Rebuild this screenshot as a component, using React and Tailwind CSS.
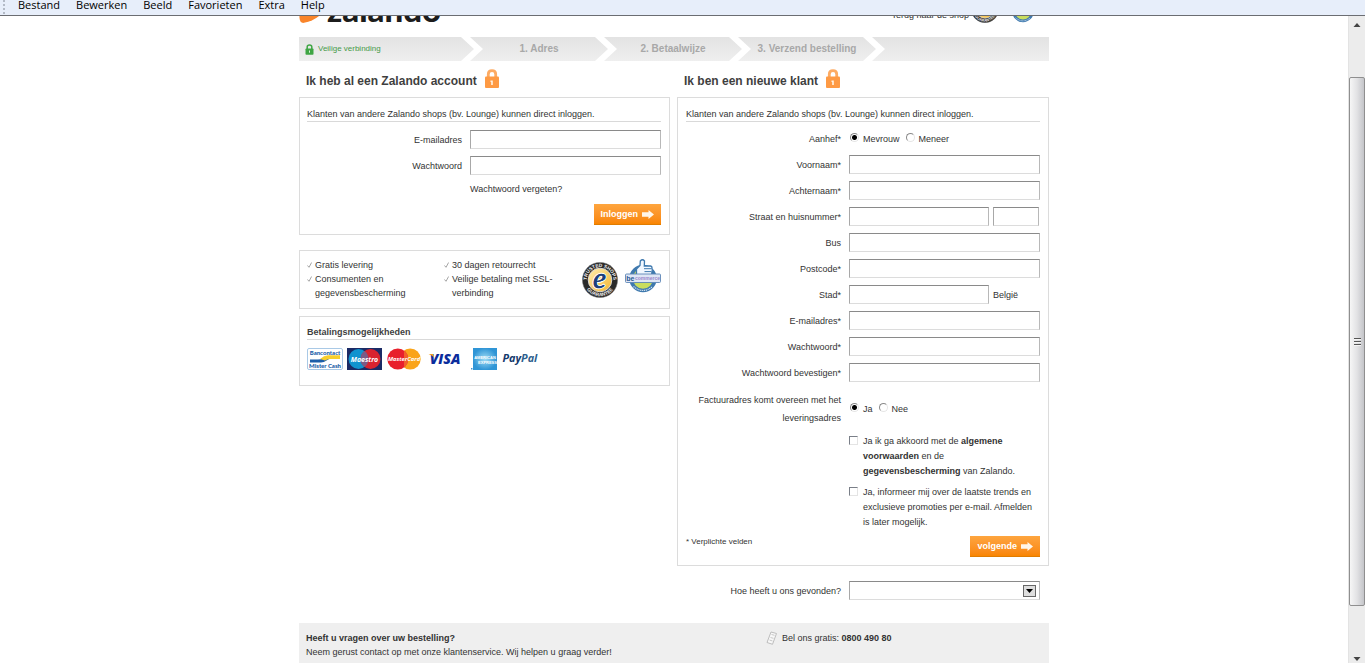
import React from "react";

const fieldBox =
  "h-[19px] rounded-none border border-t-[#8a8a8a] border-l-[#a8a8a8] border-r-[#b8b8b8] border-b-[#dcdcdc] bg-white px-1 text-[9px] outline-none";

const radioBox =
  "h-[9px] w-[9px] shrink-0 appearance-none rounded-full border border-t-[#8a8a8a] border-l-[#8a8a8a] border-r-[#e6e6e6] border-b-[#e6e6e6] bg-white checked:bg-[radial-gradient(circle,#000_0,#000_2px,transparent_3px)]";

const checkBox =
  "mt-[2px] h-[9px] w-[9px] shrink-0 appearance-none border border-t-[#7a7f88] border-l-[#7a7f88] border-r-[#e4e4e4] border-b-[#e4e4e4] bg-white checked:bg-[#555]";

function MenuBar() {
  return (
    <header className="flex h-4 shrink-0 items-start border-b border-[#6b6d72] bg-[#e7eefa] font-['Open_Sans','Noto_Sans',sans-serif] text-[11px] leading-[10px] text-black">
      <svg className="ml-[3px] mr-[13px] h-[14px] w-[2px]" viewBox="0 0 2 14" aria-hidden="true">
        {[0, 4, 8, 12].map((y) => (
          <rect key={y} x="0" y={y} width="2" height="2" fill="#b3bac6" />
        ))}
      </svg>
      <nav className="flex gap-4">
        {["Bestand", "Bewerken", "Beeld", "Favorieten", "Extra", "Help"].map((m) => (
          <button key={m} type="button">
            {m}
          </button>
        ))}
      </nav>
    </header>
  );
}

function ScrollBar() {
  return (
    <div className="flex w-[17px] shrink-0 flex-col border-l border-[#e3e3e3] bg-[#ececec]" aria-hidden="true">
      <svg className="h-[17px] w-4 shrink-0" viewBox="0 0 16 17">
        <path d="M4.500 11 L8 7 L11.500 11 Z" fill="#444" />
      </svg>
      <div className="flex-[44]" />
      <div className="flex flex-[529] items-center justify-center rounded-[2px] border border-[#8f8f8f] bg-linear-to-r from-[#f6f6f6] via-[#e2e2e4] to-[#c4c5c9]">
        <svg className="h-2 w-[7px]" viewBox="0 0 7 8">
          {[0, 3, 6].map((y) => (
            <g key={y}>
              <rect y={y} width="7" height="1" fill="#555" />
              <rect y={y + 1} width="7" height="1" fill="#f4f4f4" />
            </g>
          ))}
        </svg>
      </div>
      <div className="flex-[40]" />
      <svg className="h-[17px] w-4 shrink-0" viewBox="0 0 16 17">
        <path d="M4.500 11 L8 15 L11.500 11 Z" fill="#444" />
      </svg>
    </div>
  );
}

function TrustedBadge({ className, id, showTop = true }) {
  return (
    <svg className={className} viewBox="0 0 36 36" aria-label="Trusted Shops Guarantee">
      <defs>
        <path id={`${id}-top`} d="M5.500 22.500 A13.200 13.200 0 1 1 30.500 22.500" />
        <path id={`${id}-bottom`} d="M1.800 18 A16.200 16.200 0 0 0 34.200 18" />
        <linearGradient id={`${id}-gold`} x1="0" y1="0" x2="1" y2="1">
          <stop offset="0" stopColor="#ffedb0" />
          <stop offset="1" stopColor="#f2b632" />
        </linearGradient>
      </defs>
      <circle cx="18" cy="18" r="17.600" fill="#2a2a2a" stroke="#777" strokeWidth="0.500" />
      <circle cx="18" cy="18" r="11.800" fill={`url(#${id}-gold)`} stroke="#ddd" strokeWidth="0.900" />
      <g fill="#f2f2f2" fontFamily="Liberation Sans, sans-serif" fontWeight="700" fontSize="4.800" textAnchor="middle">
        {showTop && (
          <text>
            <textPath href={`#${id}-top`} startOffset="50%">TRUSTED SHOPS</textPath>
          </text>
        )}
        <text>
          <textPath href={`#${id}-bottom`} startOffset="50%">GUARANTEE</textPath>
        </text>
      </g>
      <text x="17.500" y="25.500" fontSize="29" fontStyle="italic" textAnchor="middle" fill="#1c3f7c" stroke="#fff" strokeWidth="2.500" paintOrder="stroke" fontFamily="Liberation Serif, serif">e</text>
      <text x="17.500" y="25.500" fontSize="29" fontStyle="italic" textAnchor="middle" fill="#1c3f7c" stroke="#1c3f7c" strokeWidth="0.600" aria-hidden="true" fontFamily="Liberation Serif, serif">e</text>
    </svg>
  );
}

function BeCommerceBadge({ className }) {
  return (
    <svg className={className} viewBox="0 0 36 35" aria-label="Be Commerce">
      <circle cx="18" cy="19.500" r="12" fill="#c9dd5f" stroke="#3f79ae" strokeWidth="3.500" />
      <path d="M8.500 27.500 Q18 35.500 27.500 27.500" fill="none" stroke="#cfe0ee" strokeWidth="1.200" strokeDasharray="1.200 0.700" />
      <path d="M11.500 16 V10 L15 6.500 L15.300 2 Q17.500 -0.500 19.500 2 L19.300 7 H25.500 Q27.500 7.500 26.800 9.500 Q28 11.200 26.800 12.800 Q27.500 15 25.500 16 Z" fill="#f2f8ff" stroke="#3f79ae" strokeWidth="1.300" />
      <path d="M19 9.700 H26 M19.500 12.600 H26" stroke="#3f79ae" strokeWidth="1" />
      <rect x="0.500" y="15" width="35" height="8.500" rx="1" fill="#dfe6f5" stroke="#5b86b6" strokeWidth="0.900" />
      <text x="1.300" y="21.500" fontSize="7" fontWeight="700" fill="#2a5a94" fontFamily="Liberation Sans, sans-serif">be</text>
      <text x="10" y="21.200" fontSize="5" fontWeight="700" fill="#9a88cc" fontFamily="Liberation Sans, sans-serif">commerce</text>
    </svg>
  );
}

function OrangeLock() {
  return (
    <svg className="h-5 w-4 shrink-0" viewBox="0 0 16 20" aria-hidden="true">
      <path d="M4.300 9 V5.200 Q4.300 1.700 8 1.700 Q11.700 1.700 11.700 5.200 V9" fill="none" stroke="#fdab63" strokeWidth="2.800" />
      <rect x="1" y="7.500" width="14" height="11.500" rx="1" fill="#fe9a44" />
      <path d="M6.500 11.500 H8.800 V16 H7.200 V13 H6.500 Z" fill="#fff3e4" />
    </svg>
  );
}

function Chevron() {
  return (
    <svg className="h-6 w-[22px] shrink-0" viewBox="0 0 22 24" aria-hidden="true">
      <path d="M0 0 H9 L22 12 L9 24 H0 L13 12 Z" fill="#fff" />
    </svg>
  );
}

function Steps() {
  return (
    <ol className="flex h-6 items-center bg-linear-to-b from-[#e3e3e3] to-[#efefef] text-[10px] font-bold text-[#a8a8a8]">
      <li className="flex w-[162px] items-center gap-1 pl-[6px] text-[8px] font-normal text-[#479a48]">
        <svg className="h-[11px] w-[9px]" viewBox="0 0 9 11" aria-hidden="true">
          <path d="M2.200 5 V3 Q2.200 1 4.500 1 Q6.800 1 6.800 3 V5" fill="none" stroke="#3fa544" strokeWidth="1.500" />
          <rect x="0.500" y="4.500" width="8" height="6.200" rx="0.800" fill="#3fa544" />
          <rect x="4" y="6.500" width="1" height="2.200" fill="#d9f0da" />
        </svg>
        Veilige verbinding
      </li>
      {["1. Adres", "2. Betaalwijze", "3. Verzend bestelling"].map((s) => (
        <li key={s} className="flex items-center">
          <Chevron />
          <span className="w-28 text-center whitespace-nowrap">{s}</span>
        </li>
      ))}
      <li aria-hidden="true">
        <Chevron />
      </li>
    </ol>
  );
}

function Row({ label, id, children }) {
  return (
    <div className="flex items-center gap-2">
      <label htmlFor={id} className="flex-1 text-right">
        {label}
      </label>
      <div className="flex w-[191px] items-center gap-1">{children}</div>
    </div>
  );
}

function TextRow({ label, id, type = "text" }) {
  return (
    <Row label={label} id={id}>
      <input id={id} type={type} className={`${fieldBox} w-full`} />
    </Row>
  );
}

function RadioPair({ name, options }) {
  return (
    <div className="flex h-[19px] items-center gap-[6px] pl-px">
      {options.map((o, i) => (
        <label key={o} className="flex items-start gap-1">
          <input type="radio" name={name} defaultChecked={i === 0} className={radioBox} />
          <span className="leading-3">{o}</span>
        </label>
      ))}
    </div>
  );
}

function OrangeButton({ children }) {
  return (
    <button
      type="submit"
      className="flex h-[21px] items-center gap-1 border-b border-[#e07c00] bg-linear-to-b from-[#fea53e] to-[#f98500] px-[7px] text-[9px] font-bold text-white"
    >
      {children}
      <svg className="h-[9px] w-3" viewBox="0 0 12 9" aria-hidden="true">
        <path d="M0 2.200 H6.500 V0 L12 4.500 L6.500 9 V6.800 H0 Z" fill="#fff6ea" />
      </svg>
    </button>
  );
}

function Usp({ children }) {
  return (
    <li className="flex items-start gap-[3px]">
      <svg className="mt-1 h-[6px] w-[5px] shrink-0" viewBox="0 0 5 6" aria-hidden="true">
        <path d="M0.500 3.500 L2 5.300 L4.600 0.500" fill="none" stroke="#a5a5a5" strokeWidth="1" />
      </svg>
      <span>{children}</span>
    </li>
  );
}

function PaymentLogos() {
  return (
    <div className="mt-2 flex h-[22px] items-center">
      <svg className="mr-1 h-[22px] w-9" viewBox="0 0 36 22" aria-label="Bancontact Mister Cash">
        <rect x="0.500" y="0.500" width="35" height="21" rx="1.500" fill="#fff" stroke="#a9c9e6" />
        <text x="18" y="6.500" fontSize="6" fontWeight="900" textAnchor="middle" fill="#1d5ea8" fontFamily="Lato, sans-serif">Bancontact</text>
        <path d="M3 11.500 H11 Q14 11.500 16.500 10 Q19 8 22 8 H33 V10.500 H25 Q22 10.500 19.500 12.500 Q17 14.500 14 14.500 H3 Z" fill="#1d5ea8" />
        <path d="M13 11 Q17 7.300 21 7.300 H33 V11 H23 Q20 11 18 12.500 Z" fill="#f8cf2c" />
        <text x="18" y="20" fontSize="6" fontWeight="900" textAnchor="middle" fill="#1d5ea8" fontFamily="Lato, sans-serif">Mister Cash</text>
      </svg>
      <svg className="mr-[5px] h-[22px] w-[35px]" viewBox="0 0 35 22" aria-label="Maestro">
        <rect width="35" height="22" fill="#1b2b66" />
        <circle cx="11.500" cy="11" r="10" fill="#1193cf" />
        <circle cx="23.500" cy="11" r="10" fill="#d8232f" />
        <path d="M17.500 3 A10 10 0 0 1 17.500 19 A10 10 0 0 1 17.500 3" fill="#7b5b86" />
        <text x="17.500" y="13.800" fontSize="7" fontWeight="700" fontStyle="italic" textAnchor="middle" fill="#fff" fontFamily="Open Sans, sans-serif">Maestro</text>
      </svg>
      <svg className="mr-[7px] h-[22px] w-[34px]" viewBox="0 0 34 22" aria-label="MasterCard">
        <circle cx="23.200" cy="11" r="10.500" fill="#faa41a" />
        <circle cx="10.800" cy="11" r="10.500" fill="#e8202c" />
        <path d="M17 2.600 V19.400 A10.500 10.500 0 0 0 17 2.600" fill="#f2602a" />
        <text x="17" y="13.400" fontSize="5.800" fontWeight="700" fontStyle="italic" textAnchor="middle" fill="#fff" fontFamily="Open Sans, sans-serif">MasterCard</text>
      </svg>
      <svg className="mr-2 h-[22px] w-[34px]" viewBox="0 0 34 22" aria-label="Visa">
        <text x="17" y="16" fontSize="14" fontWeight="800" fontStyle="italic" textAnchor="middle" fill="#0b2c9c" fontFamily="Open Sans, sans-serif">VISA</text>
        <path d="M0.500 6 H5 L6.300 9.500 Q4 7 0.500 6 Z" fill="#f5a11d" />
      </svg>
      <svg className="mr-[5px] h-[22px] w-[27px]" viewBox="0 0 27 22" aria-label="American Express">
        <defs>
          <radialGradient id="amex">
            <stop offset="0" stopColor="#9fdcf5" />
            <stop offset="1" stopColor="#2f95d6" />
          </radialGradient>
        </defs>
        <rect x="3" width="24" height="22" fill="url(#amex)" />
        <text x="15" y="11" fontSize="4" fontWeight="700" textAnchor="middle" fill="#fff" fontFamily="Liberation Sans, sans-serif">AMERICAN</text>
        <text x="17.500" y="15.500" fontSize="4" fontWeight="700" textAnchor="middle" fill="#fff" fontFamily="Liberation Sans, sans-serif">EXPRESS</text>
        <rect x="1" y="20" width="1.500" height="1.500" fill="#3f96d2" />
      </svg>
      <svg className="h-[22px] w-9" viewBox="0 0 36 22" aria-label="PayPal">
        <text x="0.500" y="14" fontSize="10.800" fontWeight="700" fontStyle="italic" fill="#14386b" fontFamily="Open Sans, sans-serif">
          Pay<tspan fill="#2d5f8e">Pal</tspan>
        </text>
      </svg>
    </div>
  );
}

function Intro() {
  return (
    <p className="border-b border-[#d9d9d9]">
      Klanten van andere Zalando shops (bv. Lounge) kunnen direct inloggen.
    </p>
  );
}

function Heading({ children }) {
  return (
    <h2 className="flex h-9 items-center gap-[7px] pl-[7px] text-[12px] font-bold text-[#3f3f3f]">
      <span className="pt-1">{children}</span>
      <OrangeLock />
    </h2>
  );
}

function LoginColumn() {
  return (
    <section className="min-w-0">
      <Heading>Ik heb al een Zalando account</Heading>
      <form className="border border-[#dcdcdc] pt-[9px] pr-2 pb-[9px] pl-[7px]" onSubmit={(e) => e.preventDefault()}>
        <Intro />
        <div className="mt-2 flex flex-col gap-[7px]">
          <TextRow label="E-mailadres" id="login-email" />
          <TextRow label="Wachtwoord" id="login-password" type="password" />
          <div className="flex justify-end">
            <a href="#forgot" className="w-[191px]">
              Wachtwoord vergeten?
            </a>
          </div>
        </div>
        <div className="mt-2 flex justify-end">
          <OrangeButton>Inloggen</OrangeButton>
        </div>
      </form>

      <div className="mt-[15px] flex border border-[#dcdcdc] pt-[7px] pr-2 pb-2 pl-[7px]">
        <ul className="w-[137px]">
          <Usp>Gratis levering</Usp>
          <Usp>Consumenten en gegevensbescherming</Usp>
        </ul>
        <ul className="w-[122px]">
          <Usp>30 dagen retourrecht</Usp>
          <Usp>Veilige betaling met SSL-verbinding</Usp>
        </ul>
        <div className="flex flex-1 justify-end gap-[7px]">
          <TrustedBadge className="mt-1 h-9 w-9 shrink-0" id="trust" />
          <BeCommerceBadge className="mt-px h-[35px] w-9 shrink-0" />
        </div>
      </div>

      <div className="mt-[7px] border border-[#dcdcdc] pt-2 pr-[7px] pb-[15px] pl-[7px]">
        <h3 className="border-b border-[#d9d9d9] font-bold text-[#3f3f3f]">Betalingsmogelijkheden</h3>
        <PaymentLogos />
      </div>
    </section>
  );
}

function RegisterColumn() {
  return (
    <section className="min-w-0">
      <Heading>Ik ben een nieuwe klant</Heading>
      <form className="border border-[#dcdcdc] px-2 pt-[9px] pb-2" onSubmit={(e) => e.preventDefault()}>
        <Intro />
        <div className="mt-[7px] flex flex-col gap-[7px]">
          <Row label="Aanhef*">
            <RadioPair name="title" options={["Mevrouw", "Meneer"]} />
          </Row>
          <TextRow label="Voornaam*" id="first" />
          <TextRow label="Achternaam*" id="last" />
          <Row label="Straat en huisnummer*" id="street">
            <input id="street" type="text" className={`${fieldBox} w-[140px]`} />
            <input aria-label="Huisnummer" type="text" className={`${fieldBox} w-[46px]`} />
          </Row>
          <TextRow label="Bus" id="box" />
          <TextRow label="Postcode*" id="zip" />
          <Row label="Stad*" id="city">
            <input id="city" type="text" className={`${fieldBox} w-[140px]`} />
            <span>België</span>
          </Row>
          <TextRow label="E-mailadres*" id="email" />
          <TextRow label="Wachtwoord*" id="password" type="password" />
          <TextRow label="Wachtwoord bevestigen*" id="password2" type="password" />
        </div>
        <div className="mt-[9px] leading-[18px]">
          <Row
            label={
              <>
                Factuuradres komt overeen met het
                <br />
                leveringsadres
              </>
            }
          >
            <RadioPair name="invoice" options={["Ja", "Nee"]} />
          </Row>
        </div>
        <div className="mt-[7px] ml-auto flex w-[191px] flex-col gap-[6px] leading-[15px]">
          <label className="flex items-start gap-[5px]">
            <input type="checkbox" className={checkBox} />
            <span>
              Ja ik ga akkoord met de <b>algemene voorwaarden</b> en de <b>gegevensbescherming</b> van Zalando.
            </span>
          </label>
          <label className="flex items-start gap-[5px]">
            <input type="checkbox" className={checkBox} />
            <span>Ja, informeer mij over de laatste trends en exclusieve promoties per e-mail. Afmelden is later mogelijk.</span>
          </label>
        </div>
        <div className="mt-[6px] flex items-start justify-between">
          <span className="text-[8px] leading-3">* Verplichte velden</span>
          <OrangeButton>volgende</OrangeButton>
        </div>
      </form>
      <div className="mt-[15px] pr-[9px]">
        <Row label="Hoe heeft u ons gevonden?" id="found">
          <div className="relative flex w-full">
            <select id="found" className={`${fieldBox} w-full appearance-none`} defaultValue="">
              <option value=""></option>
            </select>
            <svg className="pointer-events-none absolute top-1 right-1 h-3 w-[13px]" viewBox="0 0 13 12" aria-hidden="true">
              <rect x="0.500" y="0.500" width="12" height="11" fill="#dedede" stroke="#666" />
              <path d="M3 4 H10 L6.500 8 Z" fill="#000" />
            </svg>
          </div>
        </Row>
      </div>
    </section>
  );
}

export default function App() {
  return (
    <div className="flex min-h-screen flex-col bg-white font-['Liberation_Sans',Arial,sans-serif] text-[9px] leading-[14px] text-[#333]">
      <MenuBar />
      <div className="flex flex-1">
        <main className="mx-auto flex w-full max-w-[750px] flex-col">
          <div className="flex h-[21px] items-end overflow-hidden">
            <svg className="mb-[14px] h-5 w-5 shrink-0" viewBox="0 0 20 20" aria-hidden="true">
              <path d="M0 0 H20 V13 Q14 18 5 19.800 Q1 20.500 0.500 15 Z" fill="#f9842a" />
            </svg>
            <span className="ml-2 pb-3 font-['Lato',sans-serif] text-[33px] leading-[32px] font-black text-[#1c1c1c]">zalando</span>
            <div className="ml-auto flex shrink-0 items-end">
              <a href="#shop" className="mb-[15px]">
                Terug naar de shop
              </a>
              <TrustedBadge className="mb-[14px] ml-[2px] h-7 w-7" id="trust-top" showTop={false} />
              <BeCommerceBadge className="mr-3 mb-[13px] ml-[10px] h-7 w-7" />
            </div>
          </div>
          <Steps />
          <div className="grid grid-cols-[371fr_372fr] gap-[7px]">
            <LoginColumn />
            <RegisterColumn />
          </div>
          <footer className="mt-[23px] flex flex-1 bg-[#efefef] pt-2 pl-[7px]">
            <div className="w-[460px]">
              <p className="font-bold">Heeft u vragen over uw bestelling?</p>
              <p>Neem gerust contact op met onze klantenservice. Wij helpen u graag verder!</p>
            </div>
            <div className="flex items-start gap-1">
              <svg className="h-[14px] w-3" viewBox="0 0 12 14" aria-hidden="true">
                <path d="M5 1 L10.500 2.500 L6.500 13.300 L1 11.500 Z" fill="#f8f8f8" stroke="#bdbdbd" strokeWidth="1" />
                <path d="M5.500 3.500 L8.500 4.300 M4.500 6.500 L7.500 7.300 M3.500 9 L6.500 10" stroke="#c8c8c8" strokeWidth="1" />
              </svg>
              <p>
                Bel ons gratis: <b>0800 490 80</b>
              </p>
            </div>
          </footer>
        </main>
        <ScrollBar />
      </div>
    </div>
  );
}
